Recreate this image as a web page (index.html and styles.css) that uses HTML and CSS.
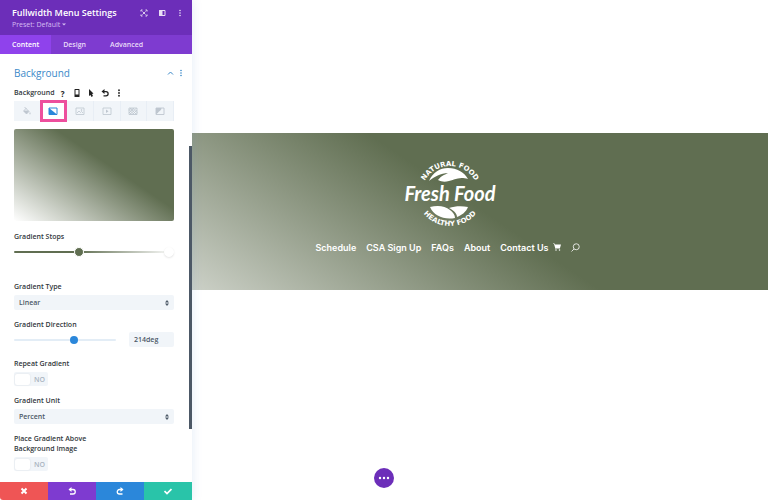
FILE: index.html
```html
<!DOCTYPE html>
<html lang="en">
<head>
    <meta charset="UTF-8">
    <meta name="viewport" content="width=device-width, initial-scale=1.0">
    <title>Fullwidth Menu Settings</title>
    <link rel="stylesheet" href="styles.css">
</head>
<body>

    <aside class="panel">
        <header class="panel-header">
            <div class="title-row">
                <h1>Fullwidth Menu Settings</h1>
                <div class="header-icons">
                    <button type="button" class="icon-btn" aria-label="Expand">
                        <svg width="8" height="8" viewBox="0 0 16 16" fill="none" stroke="currentColor" stroke-width="2"><path d="M2 5V2h3M11 2h3v3M14 11v3h-3M5 14H2v-3M5 5l2 2M11 5L9 7M5 11l2-2M11 11L9 9"/><circle cx="8" cy="8" r="2" fill="currentColor" stroke="none"/></svg>
                    </button>
                    <button type="button" class="icon-btn" aria-label="Dock">
                        <svg width="8" height="8" viewBox="0 0 16 16" fill="none" stroke="currentColor" stroke-width="2"><path d="M3 3h11v10H3zM8 3v10"/><path d="M3 3h4v10H3z" fill="currentColor"/></svg>
                    </button>
                    <button type="button" class="icon-btn" aria-label="More">
                        <svg width="8" height="8" viewBox="0 0 16 16" fill="currentColor"><circle cx="8" cy="3" r="1.600"/><circle cx="8" cy="8" r="1.600"/><circle cx="8" cy="13" r="1.600"/></svg>
                    </button>
                </div>
            </div>
            <button type="button" class="preset">Preset: Default <svg width="4" height="3" viewBox="0 0 8 6" fill="currentColor"><path d="M0 1h8L4 5z"/></svg></button>
        </header>

        <nav class="tabs">
            <a href="#content" class="active">Content</a>
            <a href="#design">Design</a>
            <a href="#advanced">Advanced</a>
        </nav>

        <form class="panel-body" id="content">
            <div class="section-head">
                <h2>Background</h2>
                <div class="section-icons">
                    <button type="button" class="icon-btn" aria-label="Collapse">
                        <svg width="7" height="8" viewBox="0 0 14 16" fill="none" stroke="currentColor" stroke-width="2"><path d="M2 11l5-5 5 5"/></svg>
                    </button>
                    <button type="button" class="icon-btn" aria-label="Section options">
                        <svg width="8" height="8" viewBox="0 0 16 16" fill="currentColor"><circle cx="8" cy="3" r="1.600"/><circle cx="8" cy="8" r="1.600"/><circle cx="8" cy="13" r="1.600"/></svg>
                    </button>
                </div>
            </div>

            <div class="label-row">
                <span class="label">Background</span>
                <button type="button" class="icon-btn help">?</button>
                <button type="button" class="icon-btn" aria-label="Responsive">
                    <svg width="8" height="8" viewBox="0 0 16 16"><path d="M4 0h8a1 1 0 0 1 1 1v14a1 1 0 0 1-1 1H4a1 1 0 0 1-1-1V1a1 1 0 0 1 1-1zm1 2v9h6V2z" fill="currentColor" fill-rule="evenodd"/></svg>
                </button>
                <button type="button" class="icon-btn" aria-label="Hover">
                    <svg width="8" height="8" viewBox="0 0 16 16" fill="currentColor"><path d="M4 0l9 9-3 1 2 4-3 2-2-4-3 2z"/></svg>
                </button>
                <button type="button" class="icon-btn" aria-label="Reset">
                    <svg width="8" height="8" viewBox="0 0 16 16" fill="none" stroke="currentColor" stroke-width="2.500"><path d="M4 5h6a4 4 0 0 1 0 8.500H5"/><path d="M7 0v10L1 5z" fill="currentColor" stroke="none"/></svg>
                </button>
                <button type="button" class="icon-btn" aria-label="Options">
                    <svg width="8" height="8" viewBox="0 0 16 16" fill="currentColor"><circle cx="8" cy="2.500" r="1.800"/><circle cx="8" cy="8" r="1.800"/><circle cx="8" cy="13.500" r="1.800"/></svg>
                </button>
            </div>

            <div class="bg-types">
                <button type="button" aria-label="Color">
                    <svg width="10" height="10" viewBox="0 0 20 20" fill="none" stroke="currentColor" stroke-width="1.800"><path d="M5 2l9 9-5 5-6-6 6-6"/><path d="M4 10h9l-4 5z" fill="currentColor"/><path d="M16 12c-2 3-1 5 0 5s2-2 0-5z" fill="currentColor" stroke="none"/></svg>
                </button>
                <button type="button" class="active" aria-label="Gradient">
                    <svg width="10" height="10" viewBox="0 0 20 20"><path d="M2 4h16v13H2z" fill="none" stroke="currentColor" stroke-width="2"/><path d="M2 4l16 13H2z" fill="currentColor"/></svg>
                </button>
                <button type="button" aria-label="Image">
                    <svg width="10" height="10" viewBox="0 0 20 20" fill="none" stroke="currentColor" stroke-width="1.600"><path d="M2 4h16v13H2z"/><path d="M4 14l4-4 3 3 2-2 3 3"/><circle cx="13" cy="8" r="1"/></svg>
                </button>
                <button type="button" aria-label="Video">
                    <svg width="10" height="10" viewBox="0 0 20 20" fill="none" stroke="currentColor" stroke-width="1.600"><path d="M2 4h16v13H2z"/><path d="M8 7l5 3.500L8 14z" fill="currentColor" stroke="none"/></svg>
                </button>
                <button type="button" aria-label="Pattern">
                    <svg width="10" height="10" viewBox="0 0 20 20" fill="none" stroke="currentColor" stroke-width="1.600"><path d="M2 4h16v13H2z"/><path d="M2 9l5-5M2 14L12 4M4 17L17 4M9 17l9-9M14 17l4-4M2 12l5 5M2 7l10 10M4 4l13 13M9 4l9 9"/></svg>
                </button>
                <button type="button" aria-label="Mask">
                    <svg width="10" height="10" viewBox="0 0 20 20"><path d="M2 4h16v13H2z" fill="none" stroke="currentColor" stroke-width="1.800"/><path d="M2 4h11c0 5-4 6-6 8-1 2-3 3-5 5z" fill="currentColor"/></svg>
                </button>
            </div>

            <div class="gradient-preview"></div>

            <label class="label" for="stop-start">Gradient Stops</label>
            <div class="stops">
                <input type="range" id="stop-start" class="stop-start" min="0" max="100" value="40">
                <input type="range" class="stop-end" min="0" max="100" value="100" aria-label="End stop">
            </div>

            <label class="label" for="gradient-type">Gradient Type</label>
            <div class="select">
                <select id="gradient-type">
                    <option>Linear</option>
                    <option>Circular</option>
                </select>
                <svg width="4" height="6" viewBox="0 0 8 12" fill="currentColor"><path d="M0 5l4-5 4 5zM0 7h8l-4 5z"/></svg>
            </div>

            <label class="label" for="direction">Gradient Direction</label>
            <div class="direction">
                <input type="range" id="direction" min="0" max="360" value="214">
                <input type="text" value="214deg" aria-label="Direction value">
            </div>

            <span class="label">Repeat Gradient</span>
            <label class="toggle"><input type="checkbox" aria-label="Repeat Gradient">NO</label>

            <label class="label" for="gradient-unit">Gradient Unit</label>
            <div class="select">
                <select id="gradient-unit">
                    <option>Percent</option>
                    <option>Pixels</option>
                </select>
                <svg width="4" height="6" viewBox="0 0 8 12" fill="currentColor"><path d="M0 5l4-5 4 5zM0 7h8l-4 5z"/></svg>
            </div>

            <span class="label narrow">Place Gradient Above Background Image</span>
            <label class="toggle"><input type="checkbox" aria-label="Place Gradient Above Background Image">NO</label>
        </form>

        <div class="scrollbar"></div>

        <footer class="actions">
            <button type="button" class="discard" aria-label="Discard">
                <svg width="8" height="8" viewBox="0 0 16 16" stroke="currentColor" stroke-width="4"><path d="M3 3l10 10M13 3L3 13"/></svg>
            </button>
            <button type="button" class="undo" aria-label="Undo">
                <svg width="8" height="8" viewBox="0 0 16 16" fill="none" stroke="currentColor" stroke-width="2.600"><path d="M3 5h7a4 4 0 0 1 0 9H4"/><path d="M7 0v10L1 5z" fill="currentColor" stroke="none"/></svg>
            </button>
            <button type="button" class="redo" aria-label="Redo">
                <svg width="8" height="8" viewBox="0 0 16 16" fill="none" stroke="currentColor" stroke-width="2.600"><path d="M13 5H7a4 4 0 0 0 0 9h6"/><path d="M9 0v10l6-5z" fill="currentColor" stroke="none"/></svg>
            </button>
            <button type="button" class="save" aria-label="Save">
                <svg width="8" height="8" viewBox="0 0 16 16" fill="none" stroke="currentColor" stroke-width="3.500"><path d="M1 8l5 5 9-9"/></svg>
            </button>
        </footer>
    </aside>

    <main class="preview">
        <div class="menu-banner">
            <!-- logo -->
            <svg class="logo" width="96" height="72" viewBox="0 0 96 72" fill="#fff">
                <defs>
                    <path id="arc-top" d="M19 37A29 29 0 0 1 77 37"/>
                    <path id="arc-bottom" d="M14 34A34 34 0 0 0 82 34"/>
                </defs>
                <text class="logo-ring" text-anchor="middle"><textPath href="#arc-top" startOffset="50%">NATURAL FOOD</textPath></text>
                <path d="M27 23C31 14 38 10 46 10c9 0 16 4 20 11-9-3-14 1-19 2-4 1-7 1-11-1 3-4 6-5 10-7-7 0-14 4-19 8z"/>
                <text class="logo-name" x="48" y="43" text-anchor="middle">Fresh Food</text>
                <path d="M28 49c8-2 15-1 20 3 3 2 5 5 5 8-11 2-21-2-25-11z"/>
                <path d="M47 50c6-2 13-2 19-1-2 5-6 8-11 10 0-4-4-7-8-9z"/>
                <text class="logo-ring" text-anchor="middle"><textPath href="#arc-bottom" startOffset="50%">HEALTHY FOOD</textPath></text>
            </svg>
            <nav class="menu">
                <a href="#schedule">Schedule</a>
                <a href="#csa">CSA Sign Up</a>
                <a href="#faqs">FAQs</a>
                <a href="#about">About</a>
                <a href="#contact">Contact Us</a>
                <a href="#cart" class="cart" aria-label="Cart">
                    <svg width="8" height="8" viewBox="0 0 16 16" fill="currentColor"><path d="M0 1h3l1 2h12l-2 7H5l1 1h8v1H5L2 2H0z"/><circle cx="6" cy="14" r="1.500"/><circle cx="13" cy="14" r="1.500"/></svg>
                </a>
                <button type="button" class="search" aria-label="Search">
                    <svg width="9" height="9" viewBox="0 0 18 18" fill="none" stroke="currentColor" stroke-width="1.600"><circle cx="10.500" cy="7.500" r="6"/><path d="M6 12l-5 5"/></svg>
                </button>
            </nav>
        </div>
    </main>

    <button type="button" class="page-options" aria-label="Page options">
        <svg width="12" height="4" viewBox="0 0 12 4" fill="#fff"><circle cx="2" cy="2" r="1.200"/><circle cx="6" cy="2" r="1.200"/><circle cx="10" cy="2" r="1.200"/></svg>
    </button>

</body>
</html>
```
FILE: styles.css
```css
/* Basic page styling */
* {
    box-sizing: border-box;
}

body {
    display: flex;
    min-height: 100vh;
    margin: 0;
    font-family: "Open Sans", "Noto Sans", sans-serif;
    font-size: 7px;
    color: #4c5866;
    background-color: #fff;
}

button,
input,
select {
    margin: 0;
    padding: 0;
    border: none;
    font: inherit;
    color: inherit;
    background: none;
}

button {
    cursor: pointer;
}

svg {
    display: block;
}

.icon-btn {
    display: flex;
    align-items: center;
    justify-content: center;
}

/* Settings panel */
.panel {
    position: relative;
    z-index: 1;
    display: flex;
    flex-direction: column;
    flex: 0 0 192px;
    background-color: #fff;
    box-shadow: 0 0 10px rgba(60, 120, 200, 0.15);
}

.panel-header {
    height: 35px;
    padding: 6px 8px 0 12px;
    color: #fff;
    background-color: #6c2eb9;
}

.title-row {
    display: flex;
    align-items: center;
    justify-content: space-between;
    height: 13px;
}

h1 {
    margin: 0;
    font-size: 9px;
    font-weight: 600;
}

.header-icons {
    display: flex;
    gap: 10px;
    opacity: 0.85;
}

.preset {
    display: flex;
    align-items: center;
    gap: 2px;
    height: 10px;
    color: #d6bdf3;
}

.tabs {
    display: flex;
    height: 19px;
    background-color: #7e3bd0;
}

.tabs a {
    padding: 0 12px;
    line-height: 19px;
    font-weight: 600;
    color: #e9dcf9;
    text-decoration: none;
}

.tabs .active {
    color: #fff;
    background-color: #8f42ec;
}

.panel-body {
    display: flex;
    flex-direction: column;
    flex: 1;
    padding: 11px 18px 0 14px;
}

.section-head {
    display: flex;
    align-items: center;
    justify-content: space-between;
    height: 16px;
    color: #3b89c9;
}

h2 {
    margin: 0;
    font-size: 10px;
    font-weight: 400;
}

.section-icons {
    display: flex;
    gap: 3px;
    margin-right: -11px;
}

.label-row {
    display: flex;
    align-items: center;
    gap: 2px;
    height: 10px;
    margin-top: 7px;
    color: #222;
}

.label-row .icon-btn {
    width: 12px;
}

.label {
    line-height: 10px;
    font-weight: 600;
    color: #32373c;
}

.help {
    font-size: 8px;
    font-weight: 700;
}

.bg-types {
    display: grid;
    grid-template-columns: repeat(6, 1fr);
    height: 20px;
    margin: 3px 0 8px;
    background-color: #f1f5f9;
}

.bg-types button {
    display: flex;
    align-items: center;
    justify-content: center;
    color: #bec6cf;
    border-right: 1px solid #e8eef5;
}

.bg-types .active {
    margin: -1px 0 -1px -1px;
    color: #2b87da;
    background-color: #fff;
    border: 3px solid #ed4f9d;
}

.gradient-preview {
    height: 92px;
    margin-bottom: 11px;
    border-radius: 2px;
    background-image: linear-gradient(214deg, #606e51 40%, #fff 100%);
}

/* Sliders */
input[type="range"] {
    appearance: none;
    width: 100%;
    height: 10px;
}

input[type="range"]::-webkit-slider-runnable-track {
    height: 2px;
    border-radius: 1px;
    background-color: #e3edf6;
}

input[type="range"]::-webkit-slider-thumb {
    appearance: none;
    width: 8px;
    height: 8px;
    margin-top: -3px;
    border-radius: 50%;
    background-color: #2b87da;
}

.stops {
    display: grid;
    margin: 5px 0 25px;
}

.stops input {
    grid-area: 1 / 1;
    pointer-events: none;
}

.stops .stop-start::-webkit-slider-runnable-track {
    height: 2px;
    background: linear-gradient(90deg, #606e51 40%, #fff 100%);
}

.stops input::-webkit-slider-thumb {
    width: 10px;
    height: 10px;
    margin-top: -4px;
    border: 1px solid #fff;
    background-color: #606e51;
    pointer-events: auto;
}

.stops .stop-end::-webkit-slider-runnable-track {
    background: none;
}

.stops .stop-end::-webkit-slider-thumb {
    background-color: #fff;
    box-shadow: 0 1px 2px rgba(0, 0, 0, 0.1);
}

/* Fields */
.select {
    position: relative;
    height: 15px;
    margin: 3px 0 10px;
    font-weight: 600;
}

.select select {
    appearance: none;
    width: 100%;
    height: 15px;
    padding: 0 5px;
    border-radius: 2px;
    background-color: #f1f5f9;
}

.select svg {
    position: absolute;
    top: 5px;
    right: 5px;
    pointer-events: none;
}

.direction {
    display: flex;
    align-items: center;
    gap: 13px;
    margin: 2px 0 12px;
}

.direction input[type="range"] {
    flex: 1;
    min-width: 0;
}

.direction input[type="text"] {
    width: 45px;
    height: 15px;
    padding: 0 5px;
    font-weight: 600;
    border-radius: 2px;
    background-color: #f1f5f9;
}

.toggle {
    display: flex;
    align-items: center;
    gap: 4px;
    width: 34px;
    height: 14px;
    margin: 3px 0 10px;
    padding: 1px;
    font-weight: 600;
    color: #a9b4c0;
    border-radius: 2px;
    background-color: #f1f5f9;
}

.toggle input {
    appearance: none;
    width: 15px;
    height: 11px;
    border-radius: 2px;
    background-color: #fff;
    box-shadow: 0 0 2px rgba(0, 0, 0, 0.1);
}

.narrow {
    max-width: 80px;
}

.scrollbar {
    position: absolute;
    top: 146px;
    right: 0;
    bottom: 71px;
    width: 3px;
    background-color: #4c5866;
}

.actions {
    display: grid;
    grid-template-columns: repeat(4, 1fr);
    height: 18px;
    color: #fff;
}

.actions button {
    display: flex;
    align-items: center;
    justify-content: center;
}

.discard {
    background-color: #ef5555;
    border-bottom-left-radius: 3px;
}

.undo {
    background-color: #7e3bd0;
}

.redo {
    background-color: #2b87da;
}

.save {
    background-color: #29c4a9;
}

/* Page preview */
.preview {
    flex: 1;
    min-width: 0;
    padding-top: 133px;
}

/* the banner runs on underneath the panel */
.menu-banner {
    display: flex;
    flex-direction: column;
    align-items: center;
    gap: 11px;
    margin-left: -192px;
    padding: 25px 0 37px 128px;
    background-image: linear-gradient(214deg, #606e51 40%, #fff 100%);
}

.logo {
    margin-left: 4px;
}

.logo-ring {
    font-family: "DejaVu Sans", sans-serif;
    font-size: 7px;
    font-weight: 700;
}

.logo-name {
    font-family: "Lato", sans-serif;
    font-size: 20px;
    font-weight: 700;
    font-style: italic;
}

.menu {
    display: flex;
    align-items: center;
    gap: 10px;
    height: 12px;
    font-family: "Inter", sans-serif;
    font-size: 9px;
    font-weight: 600;
    color: #fff;
}

.menu a {
    color: #fff;
    text-decoration: none;
}

.menu .cart {
    margin-left: -5px;
}

.page-options {
    position: fixed;
    bottom: 12px;
    left: 50%;
    z-index: 2;
    display: flex;
    align-items: center;
    justify-content: center;
    width: 20px;
    height: 20px;
    margin-left: -10px;
    border-radius: 50%;
    background-color: #6c2eb9;
}
```
